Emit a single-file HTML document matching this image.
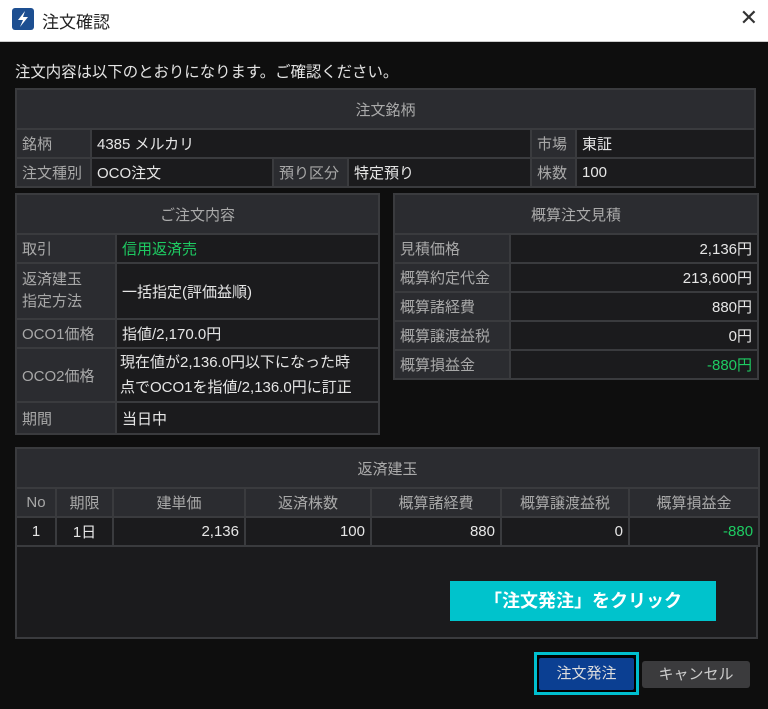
<!DOCTYPE html>
<html><head><meta charset="utf-8"><style>
*{margin:0;padding:0;box-sizing:border-box}
body{width:768px;height:709px;background:#0e0e0e;font-family:"Liberation Sans","Noto Sans CJK JP",sans-serif;position:relative;overflow:hidden;color:#ddd}
.title{position:absolute;left:0;top:0;width:768px;height:42px;background:#fff;border-bottom:1px solid #ccc}
.title .ic{position:absolute;left:12px;top:8px;width:22px;height:22px;background:#1d4f91;border-radius:3px}
.title .t{position:absolute;left:42px;top:8px;font-size:17px;color:#222}
.title .x{position:absolute;right:10px;top:5px;font-size:22px;color:#333}
.msg{position:absolute;left:15px;top:60px;font-size:15.4px;color:#e4e4e4}
table{position:absolute;border-collapse:collapse;table-layout:fixed;font-size:15px}
td{border:2px solid #3a3b3e;height:29px;padding:0 5px;white-space:nowrap;overflow:hidden}
td.h{background:#2b2c30;color:#aaa;text-align:center;height:40px}
td.l{background:#2b2c30;color:#a8a8a8}
td.v{background:#1b1b1d;color:#e6e6e6}
td.r{text-align:right}
.g{color:#1ecb62!important}
.wrap{position:absolute;border:2px solid #3a3b3e;background:#1b1b1d}
</style></head><body>
<div class="title"><div class="ic"><svg width="22" height="22" viewBox="0 0 22 22"><path d="M13 3L6 12h5l-3 7 8-10h-5l2-6z" fill="#fff"/></svg></div><div class="t">注文確認</div><div class="x">✕</div></div>
<div class="msg">注文内容は以下のとおりになります。ご確認ください。</div>

<table style="left:15px;top:88px;width:739px">
<colgroup><col style="width:75px"><col style="width:182px"><col style="width:75px"><col style="width:183px"><col style="width:45px"><col style="width:179px"></colgroup>
<tr><td class="h" colspan="6">注文銘柄</td></tr>
<tr><td class="l">銘柄</td><td class="v" colspan="3">4385 メルカリ</td><td class="l">市場</td><td class="v">東証</td></tr>
<tr><td class="l">注文種別</td><td class="v">OCO注文</td><td class="l">預り区分</td><td class="v">特定預り</td><td class="l">株数</td><td class="v">100</td></tr>
</table>

<table style="left:15px;top:193px;width:363px">
<colgroup><col style="width:100px"><col style="width:263px"></colgroup>
<tr><td class="h" colspan="2">ご注文内容</td></tr>
<tr><td class="l">取引</td><td class="v g">信用返済売</td></tr>
<tr><td class="l" style="height:56px;line-height:22px">返済建玉<br>指定方法</td><td class="v">一括指定(評価益順)</td></tr>
<tr><td class="l">OCO1価格</td><td class="v">指値/2,170.0円</td></tr>
<tr><td class="l" style="height:54px">OCO2価格</td><td class="v" style="line-height:25px;padding:0 3px">現在値が2,136.0円以下になった時<br>点でOCO1を指値/2,136.0円に訂正</td></tr>
<tr><td class="l" style="height:32px">期間</td><td class="v">当日中</td></tr>
</table>

<table style="left:393px;top:193px;width:364px">
<colgroup><col style="width:116px"><col style="width:248px"></colgroup>
<tr><td class="h" colspan="2">概算注文見積</td></tr>
<tr><td class="l">見積価格</td><td class="v r">2,136円</td></tr>
<tr><td class="l">概算約定代金</td><td class="v r">213,600円</td></tr>
<tr><td class="l">概算諸経費</td><td class="v r">880円</td></tr>
<tr><td class="l">概算譲渡益税</td><td class="v r">0円</td></tr>
<tr><td class="l">概算損益金</td><td class="v r g">-880円</td></tr>
</table>

<div class="wrap" style="left:15px;top:447px;width:743px;height:192px"></div>
<table style="left:15px;top:447px;width:743px">
<colgroup><col style="width:40px"><col style="width:57px"><col style="width:132px"><col style="width:126px"><col style="width:130px"><col style="width:128px"><col style="width:130px"></colgroup>
<tr><td class="h" colspan="7">返済建玉</td></tr>
<tr><td class="l" style="text-align:center;padding:0">No</td><td class="l" style="text-align:center">期限</td><td class="l" style="text-align:center">建単価</td><td class="l" style="text-align:center">返済株数</td><td class="l" style="text-align:center">概算諸経費</td><td class="l" style="text-align:center">概算譲渡益税</td><td class="l" style="text-align:center">概算損益金</td></tr>
<tr><td class="v" style="text-align:center;padding:0">1</td><td class="v" style="text-align:center">1日</td><td class="v r">2,136</td><td class="v r">100</td><td class="v r">880</td><td class="v r">0</td><td class="v r g">-880</td></tr>
</table>

<div style="position:absolute;left:450px;top:581px;width:266px;height:40px;background:#00c3cc;color:#fff;font-size:18px;font-weight:bold;text-align:center;line-height:40px">「注文発注」をクリック</div>
<div style="position:absolute;left:534px;top:652px;width:105px;height:43px;border:3px solid #00bfcf;background:#000"></div>
<div style="position:absolute;left:539px;top:658px;width:95px;height:32px;background:#0b3f92;border-radius:2px;color:#ddd;font-size:15px;text-align:center;line-height:32px">注文発注</div>
<div style="position:absolute;left:642px;top:661px;width:108px;height:27px;background:#3b3b3d;border-radius:3px;color:#ccc;font-size:15px;text-align:center;line-height:27px">キャンセル</div>
</body></html>
